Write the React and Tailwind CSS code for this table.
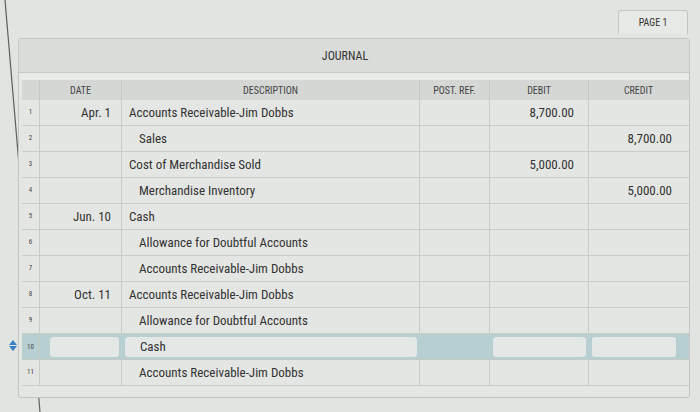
import React from "react";

const rows = [
  { date: "Apr. 1", desc: "Accounts Receivable-Jim Dobbs", indent: false, debit: "8,700.00" },
  { desc: "Sales", indent: true, credit: "8,700.00" },
  { desc: "Cost of Merchandise Sold", indent: false, debit: "5,000.00" },
  { desc: "Merchandise Inventory", indent: true, credit: "5,000.00" },
  { date: "Jun. 10", desc: "Cash", indent: false },
  { desc: "Allowance for Doubtful Accounts", indent: true },
  { desc: "Accounts Receivable-Jim Dobbs", indent: true },
  { date: "Oct. 11", desc: "Accounts Receivable-Jim Dobbs", indent: false },
  { desc: "Allowance for Doubtful Accounts", indent: true },
  { desc: "Cash", indent: true, active: true },
  { desc: "Accounts Receivable-Jim Dobbs", indent: true },
];

const cols = "grid grid-cols-[18px_82px_298px_70px_99px_99px]";

function Row({ r, n }) {
  if (r.active) {
    return (
      <div className={`${cols} relative h-[26px] bg-[#b7cfd1] border-b border-[#c4c9c6]`}>
        {/* up/down marker */}
        <div className="absolute left-[-13px] top-[6px] flex flex-col items-center gap-[1px]">
          <div className="w-0 h-0 border-l-[4px] border-r-[4px] border-b-[5px] border-l-transparent border-r-transparent border-b-[#3a7fc4]" />
          <div className="w-0 h-0 border-l-[4px] border-r-[4px] border-t-[5px] border-l-transparent border-r-transparent border-t-[#3a7fc4]" />
        </div>
        <div className="flex items-center justify-center text-[7px] text-[#444] border-r border-[#c4c9c6]">{n}</div>
        <div className="p-[3px] pl-[10px]">
          <div className="h-full rounded-[3px] bg-[#e3e8e6]" />
        </div>
        <div className="p-[3px]">
          <div className="h-full rounded-[3px] bg-[#e3e8e6] flex items-center pl-[15px] text-[13px] text-[#333]">{r.desc}</div>
        </div>
        <div />
        <div className="p-[3px]">
          <div className="h-full rounded-[3px] bg-[#e3e8e6]" />
        </div>
        <div className="p-[3px] pr-[12px]">
          <div className="h-full rounded-[3px] bg-[#e3e8e6]" />
        </div>
      </div>
    );
  }
  return (
    <div className={`${cols} h-[26px] border-b border-[#c9cdca]`}>
      <div className="flex items-center justify-center text-[7px] text-[#444] border-r border-[#c9cdca]">{n}</div>
      <div className="flex items-center justify-end pr-[10px] text-[13px] text-[#333] border-r border-[#c9cdca]">{r.date}</div>
      <div className={`flex items-center text-[13px] text-[#333] border-r border-[#c9cdca] ${r.indent ? "pl-[17px]" : "pl-[7px]"}`}>{r.desc}</div>
      <div className="border-r border-[#c9cdca]" />
      <div className="flex items-center justify-end pr-[14px] text-[13px] text-[#333] border-r border-[#c9cdca]">{r.debit}</div>
      <div className="flex items-center justify-end pr-[16px] text-[13px] text-[#333]">{r.credit}</div>
    </div>
  );
}

export default function App() {
  return (
    <div
      className="relative w-[700px] h-[412px] overflow-hidden bg-[#e2e4e1]"
      style={{ fontFamily: '"Liberation Sans Narrow", "Roboto Condensed", "Liberation Sans", sans-serif' }}
    >
      {/* screen edge */}
      <svg className="absolute left-0 top-0 pointer-events-none" width="700" height="412">
        <line x1="5" y1="0" x2="40" y2="412" stroke="#5e605f" strokeWidth="1.2" />
      </svg>

      <div className="relative flex justify-end pr-[12px] pt-[10px]">
        <div className="w-[70px] h-[24px] rounded-t-[3px] border border-b-0 border-[#c3c6c4] bg-[#e7e9e6] flex items-center justify-center text-[10px] text-[#333]">
          PAGE 1
        </div>
      </div>

      <div className="relative mt-[4px] ml-[18px] mr-[10px] border border-[#c3c6c4] rounded-[3px] bg-[#e4e6e3]">
        <div className="h-[34px] bg-[#d9dcd9] border-b border-[#c6c9c7] flex items-center justify-center pr-[18px] text-[12px] text-[#333]">
          JOURNAL
        </div>
        <div className="h-[7px] bg-[#e9ebe8]" />
        <div className="pl-[3px] pb-[11px]">
          <div className={`${cols} h-[20px] bg-[#d4d7d4] text-[10px] text-[#444]`}>
            <div className="border-r border-[#c4c8c5]" />
            <div className="flex items-center justify-center border-r border-[#c4c8c5]">DATE</div>
            <div className="flex items-center justify-center border-r border-[#c4c8c5]">DESCRIPTION</div>
            <div className="flex items-center justify-center border-r border-[#c4c8c5]">POST. REF.</div>
            <div className="flex items-center justify-center border-r border-[#c4c8c5]">DEBIT</div>
            <div className="flex items-center justify-center">CREDIT</div>
          </div>
          {rows.map((r, i) => (
            <Row key={i} r={r} n={i + 1} />
          ))}
        </div>
      </div>
    </div>
  );
}
